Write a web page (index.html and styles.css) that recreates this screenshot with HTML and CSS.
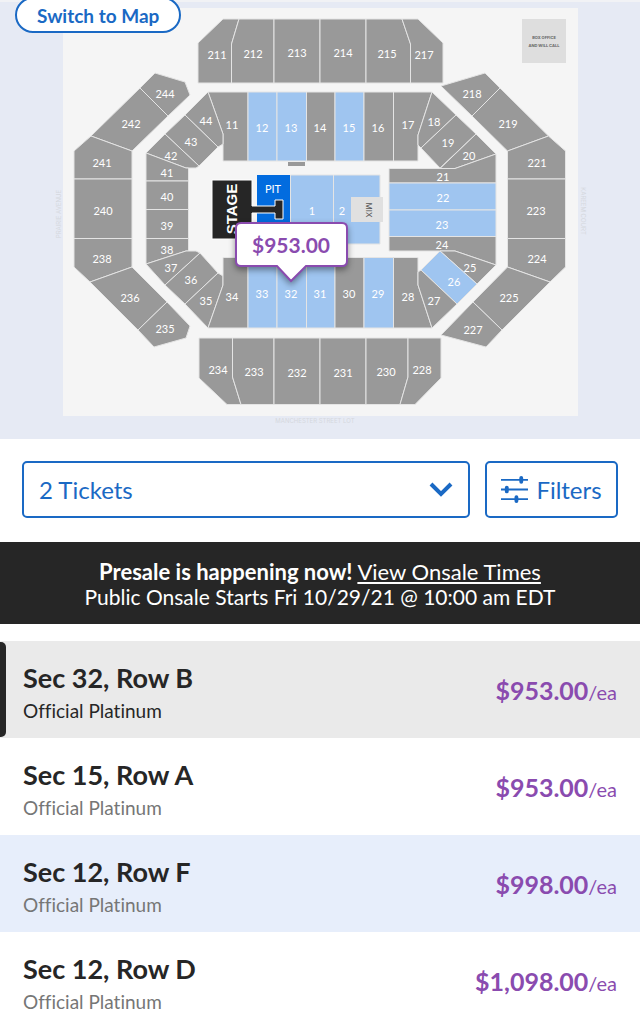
FILE: index.html
```
<!DOCTYPE html>
<html lang="en">
<head>
  <meta charset="utf-8">
  <meta name="viewport" content="width=device-width, initial-scale=1">
  <title>Select Tickets</title>
  <link rel="stylesheet" href="styles.css">
</head>
<body>

<section class="map">
  <svg class="seatmap" viewBox="0 0 640 439" role="img" aria-label="Seat map">
    <rect class="ground" x="63" y="8" width="515" height="408"/>
    <rect class="top-edge" width="640" height="2"/>

    <!-- upper level -->
    <g class="sec">
      <path d="M198 43L223 19H239L231.5 44V83H198Z"/>
      <path d="M239 19H274V83H231.5V44Z"/>
      <path d="M274 19H320V83H274Z"/>
      <path d="M320 19H366V83H320Z"/>
      <path d="M366 19H402L410.5 44V83H366Z"/>
      <path d="M402 19H418L443 43V83H410.5V44Z"/>
      <path d="M155 73L185 82L190 95L168 116L140 88Z"/>
      <path d="M140 88L168 116L132 151L91 136Z"/>
      <path d="M91 136L132 151V179H74V151Z"/>
      <path d="M74 179H132V238.5H74Z"/>
      <path d="M74 238.5H132V267L90 282L74 267Z"/>
      <path d="M90 282L132 267L167 302L138 330Z"/>
      <path d="M167 302L190 326L186 338L154 347L138 330Z"/>
      <path d="M441 86L485 73L500 88L472 116Z"/>
      <path d="M500 88L548.5 136L507.5 151L472 116Z"/>
      <path d="M548.5 136L565.5 151V179H507.5V151Z"/>
      <path d="M507.5 179H565.5V238.5H507.5Z"/>
      <path d="M507.5 238.5H565.5V267L550 282L507.5 267Z"/>
      <path d="M507.5 267L550 282L502 330L473 302Z"/>
      <path d="M473 302L502 330L486 347L441 335Z"/>
      <path d="M199 338H232.5V377L241 404.5H227L199 378Z"/>
      <path d="M232.5 338H274V404.5H241L232.5 377Z"/>
      <path d="M274 338H320V404.5H274Z"/>
      <path d="M320 338H366V404.5H320Z"/>
      <path d="M366 338H408V377L400 404.5H366Z"/>
      <path d="M408 338H441V378L415 404.5H400L408 377Z"/>
    </g>

    <!-- lower bowl -->
    <g class="sec">
      <path d="M208 92H248V161H223V134Z"/>
      <path class="open" d="M248 92H277V161H248Z"/>
      <path class="open" d="M277 92H306.5V161H277Z"/>
      <path d="M306.5 92H335V161H306.5Z"/>
      <path class="open" d="M335 92H364V161H335Z"/>
      <path d="M364 92H393.5V161H364Z"/>
      <path d="M393.5 92H432L418 135V161H393.5Z"/>
      <path d="M208 92L223 134V144L218 147L185 115Z"/>
      <path d="M185 115L218 147L199 166L165 134Z"/>
      <path d="M165 134L199 166L196 168H186L146 153Z"/>
      <path d="M146 153L186 168H188.5V181H146Z"/>
      <path d="M146 181H188.5V209.5H146Z"/>
      <path d="M146 209.5H188.5V238.5H146Z"/>
      <path d="M146 238.5H188.5V251H186L146 264Z"/>
      <path d="M146 264L186 251H196L200 253L165 285Z"/>
      <path d="M165 285L200 253L218 273L185 304Z"/>
      <path d="M185 304L218 273L223 276V285L208 328Z"/>
      <path d="M223 257.5H248V328H208L223 285Z"/>
      <path class="open" d="M248 257.5H277V328H248Z"/>
      <path class="open" d="M277 257.5H306.5V328H277Z"/>
      <path class="open" d="M306.5 257.5H335V328H306.5Z"/>
      <path d="M335 257.5H364V328H335Z"/>
      <path class="open" d="M364 257.5H393.5V328H364Z"/>
      <path d="M393.5 257.5H418V285L432 328H393.5Z"/>
      <path d="M432 92L456 115L421 148L418 145V135Z"/>
      <path d="M456 115L476 134L440 168L421 148Z"/>
      <path d="M476 134L496 154L455 168.5H440Z"/>
      <path d="M389 168.5H455L496 154V183H389Z"/>
      <path class="open" d="M389 183H496V210H389Z"/>
      <path class="open" d="M389 210H496V236.5H389Z"/>
      <path d="M389 236.5H496V265L455 251H389Z"/>
      <path d="M440 251H455L496 265L477 284Z"/>
      <path class="open" d="M440 251L477 284L457 304L421 270Z"/>
      <path d="M421 270L457 304L432 328L418 285V272Z"/>
    </g>

    <!-- floor -->
    <g class="sec">
      <path class="open" d="M290.5 175H333.5V244H290.5Z"/>
      <path class="open" d="M333.5 175H380V244H333.5Z"/>
    </g>
    <rect class="pit" x="257" y="175" width="33" height="65"/>
    <rect class="usher" x="288" y="162" width="17" height="4"/>
    <path class="stage" d="M212 180H252V206H275V200H283V219H275V213H252V239H212Z"/>
    <rect class="mix" x="351" y="197" width="32" height="25"/>
    <rect class="office" x="522" y="19" width="44" height="44"/>

    <g class="num">
      <text x="217" y="59">211</text><text x="253" y="58">212</text><text x="297" y="57">213</text>
      <text x="343" y="57">214</text><text x="387" y="58">215</text><text x="424" y="59">217</text>
      <text x="165" y="98">244</text><text x="131" y="128">242</text><text x="102" y="167">241</text>
      <text x="103" y="215">240</text><text x="102" y="263">238</text><text x="130" y="302">236</text>
      <text x="165" y="333">235</text><text x="472" y="98">218</text><text x="508" y="128">219</text>
      <text x="537" y="167">221</text><text x="536" y="215">223</text><text x="537" y="263">224</text>
      <text x="509" y="302">225</text><text x="473" y="334">227</text><text x="218" y="374">234</text>
      <text x="254" y="376">233</text><text x="297" y="377">232</text><text x="343" y="377">231</text>
      <text x="386" y="376">230</text><text x="422" y="374">228</text>

      <text x="232" y="129">11</text><text x="262" y="132">12</text><text x="291" y="132">13</text>
      <text x="320" y="132">14</text><text x="349" y="132">15</text><text x="378" y="132">16</text>
      <text x="408" y="129">17</text><text x="434" y="126">18</text><text x="448" y="147">19</text>
      <text x="469" y="160">20</text><text x="443" y="181">21</text><text x="443" y="202">22</text>
      <text x="442" y="229">23</text><text x="442" y="249">24</text><text x="470" y="272">25</text>
      <text x="454" y="286">26</text><text x="434" y="305">27</text><text x="408" y="301">28</text>
      <text x="378" y="298">29</text><text x="349" y="298">30</text><text x="320" y="298">31</text>
      <text x="291" y="298">32</text><text x="262" y="298">33</text><text x="232" y="301">34</text>
      <text x="206" y="305">35</text><text x="191" y="284">36</text><text x="171" y="272">37</text>
      <text x="167" y="254">38</text><text x="167" y="230">39</text><text x="167" y="201">40</text>
      <text x="167" y="177">41</text><text x="171" y="160">42</text><text x="191" y="146">43</text>
      <text x="206" y="125">44</text><text x="312" y="215">1</text><text x="342" y="215">2</text>
      <text x="273" y="193">PIT</text>
    </g>
    <text class="stage-label" transform="translate(237 209) rotate(-90)">STAGE</text>
    <text class="mix-label" transform="translate(366 210) rotate(90)">MIX</text>
    <text class="office-label" x="544" y="39">BOX OFFICE</text>
    <text class="office-label" x="544" y="47">AND WILL CALL</text>
    <text class="street" x="315" y="423">MANCHESTER STREET LOT</text>
    <text class="street" transform="translate(61 214) rotate(-90)">PRAIRIE AVENUE</text>
    <text class="street" transform="translate(581 211) rotate(90)">KAREEM COURT</text>

    <g class="callout">
      <path d="M241 223H342Q347 223 347 228V261Q347 266 342 266H306L291 281L277 266H241Q236 266 236 261V228Q236 223 241 223Z"/>
      <text x="291" y="253">$953.00</text>
    </g>
  </svg>
  <button class="switch" type="button">Switch to Map</button>
</section>

<form class="controls">
  <div class="quantity">
    <select aria-label="Number of tickets">
      <option>1 Ticket</option>
      <option selected>2 Tickets</option>
      <option>3 Tickets</option>
      <option>4 Tickets</option>
    </select>
    <svg class="chevron" viewBox="0 0 24 16" aria-hidden="true"><path d="M2 2L12 12L22 2"/></svg>
  </div>
  <button class="filters" type="button">
    <svg viewBox="0 0 28 28" aria-hidden="true">
      <path d="M0 4H28M0 14H28M0 24H28"/>
      <path class="knob" d="M21 2V6M6 12V16M16 22V26"/>
    </svg>
    Filters
  </button>
</form>

<div class="banner">
  <p class="presale"><strong>Presale is happening now!</strong> <a href="#">View Onsale Times</a></p>
  <p>Public Onsale Starts Fri 10/29/21 @ 10:00 am EDT</p>
</div>

<ul class="listings">
  <li class="listing selected">
    <div>
      <h2>Sec 32, Row B</h2>
      <p>Official Platinum</p>
    </div>
    <div class="price"><b>$953.00</b>/ea</div>
  </li>
  <li class="listing">
    <div>
      <h2>Sec 15, Row A</h2>
      <p>Official Platinum</p>
    </div>
    <div class="price"><b>$953.00</b>/ea</div>
  </li>
  <li class="listing hover">
    <div>
      <h2>Sec 12, Row F</h2>
      <p>Official Platinum</p>
    </div>
    <div class="price"><b>$998.00</b>/ea</div>
  </li>
  <li class="listing">
    <div>
      <h2>Sec 12, Row D</h2>
      <p>Official Platinum</p>
    </div>
    <div class="price"><b>$1,098.00</b>/ea</div>
  </li>
</ul>

</body>
</html>
```
FILE: styles.css
```
* {
  box-sizing: border-box;
}
body {
  margin: 0;
  background: #fff;
  color: #262626;
  font-family: Lato, "Open Sans", sans-serif;
  font-variant-ligatures: none;
}
h2, p, ul {
  margin: 0;
  padding: 0;
}

/* seat map */
.map {
  position: relative;
  background: #e6eaf4;
}
.seatmap {
  display: block;
  width: 100%;
}
.ground {
  fill: #f5f5f5;
}
.top-edge {
  fill: #f1f2f5;
}
.sec path {
  fill: #999;
  stroke: #e4e4e4;
  stroke-width: 1;
}
.sec path.open {
  fill: #9fc5f0;
}
.pit {
  fill: #026cdf;
}
.usher {
  fill: #999;
}
.stage {
  fill: #262626;
  stroke: #fff;
  stroke-width: 1;
}
.mix {
  fill: #e0e0e0;
}
.office {
  fill: #dedede;
}
.num {
  fill: #fff;
  font-size: 11px;
  text-anchor: middle;
}
.stage-label {
  fill: #fff;
  font: bold 15px "Liberation Sans", sans-serif;
  text-anchor: middle;
}
.mix-label {
  fill: #555;
  font: 8px Inter, sans-serif;
  text-anchor: middle;
}
.office-label {
  fill: #666;
  font: bold 4px Inter, sans-serif;
  text-anchor: middle;
}
.street {
  fill: #d5d8de;
  font: 6px Inter, sans-serif;
  text-anchor: middle;
}
.callout path {
  fill: #fff;
  stroke: #8a4baf;
  stroke-width: 2;
  filter: drop-shadow(0 3px 3px rgba(0, 0, 0, 0.4));
}
.callout text {
  fill: #8a4baf;
  font-size: 21px;
  font-weight: bold;
  text-anchor: middle;
}
.switch {
  position: absolute;
  top: -3px;
  left: 15px;
  height: 36px;
  padding: 0 20px;
  border: 2px solid #1a69c4;
  border-radius: 18px;
  background: #fff;
  color: #1a69c4;
  font: bold 19px Lato, sans-serif;
}

/* quantity + filters */
.controls {
  display: flex;
  gap: 15px;
  padding: 22px 22px 24px;
}
.quantity {
  position: relative;
  flex: 1;
}
.quantity select,
.filters {
  height: 57px;
  border: 2px solid #1a69c4;
  border-radius: 5px;
  background: #fff;
  color: #1a69c4;
  font: 24px Lato, sans-serif;
}
.quantity select {
  width: 100%;
  padding: 0 15px;
  appearance: none;
}
.chevron {
  position: absolute;
  top: 21px;
  right: 17px;
  width: 24px;
  height: 16px;
  fill: none;
  stroke: #1a69c4;
  stroke-width: 4;
  pointer-events: none;
}
.filters {
  display: flex;
  align-items: center;
  justify-content: center;
  gap: 8px;
  width: 133px;
  padding: 0;
}
.filters svg {
  width: 27px;
  height: 27px;
  stroke: #1a69c4;
  stroke-width: 2;
}
.filters .knob {
  stroke-width: 4;
  stroke-linecap: round;
}

.banner {
  padding: 17px 16px 15px;
  background: #262626;
  color: #fff;
  font-size: 21px;
  line-height: 25px;
  text-align: center;
}
.presale {
  font-size: 22px;
}
.banner a {
  color: inherit;
}

/* ticket list */
.listings {
  padding-top: 17px;
  list-style: none;
}
.listing {
  display: flex;
  align-items: center;
  justify-content: space-between;
  height: 97px;
  padding: 0 23px;
}
.listing h2 {
  padding-top: 6px;
  font-size: 27px;
  line-height: 36px;
}
.listing p {
  color: #767676;
  font-size: 19px;
  line-height: 30px;
}
.listing.selected {
  position: relative;
  background: #eaeaea;
}
.listing.selected::before {
  content: "";
  position: absolute;
  top: 1px;
  bottom: 1px;
  left: 0;
  width: 6px;
  border-radius: 0 5px 5px 0;
  background: #262626;
}
.listing.selected p {
  color: #262626;
}
.listing.hover {
  background: #e7eefb;
}
.price {
  color: #8a4baf;
  font-size: 20px;
}
.price b {
  font-size: 25px;
}
```
